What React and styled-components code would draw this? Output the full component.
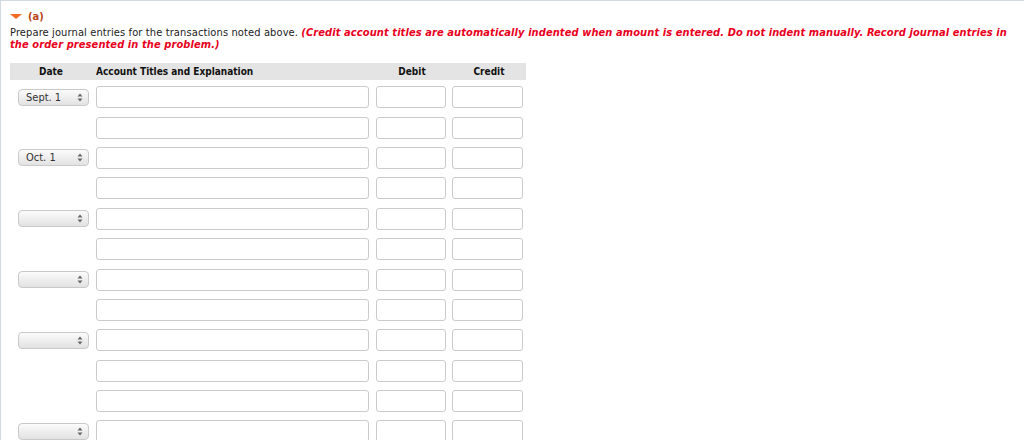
import React from "react";
import styled, { createGlobalStyle } from "styled-components";

const GlobalStyle = createGlobalStyle`
  html, body {
    margin: 0;
    padding: 0;
    background: #fff;
  }
  body {
    font-family: "DejaVu Sans Condensed", "DejaVu Sans", Verdana, sans-serif;
    font-size: 11px;
    color: #222;
  }
`;

const Page = styled.div`
  border-top: 1px solid #d3d9e3;
  border-left: 1px solid #d3d9e3;
  padding: 8px 10px 0 9px;
  height: 440px;
  box-sizing: border-box;
  overflow: hidden;
`;

const PartTitle = styled.div`
  display: flex;
  align-items: center;
  gap: 6px;
  height: 14px;
  font-weight: bold;
  font-size: 11px;
  color: #b8461c;
`;

const Caret = styled.span`
  width: 0;
  height: 0;
  border-left: 6px solid transparent;
  border-right: 6px solid transparent;
  border-top: 5px solid #f26a26;
`;

const Instructions = styled.p`
  margin: 4px 0 0;
  line-height: 12px;
  letter-spacing: 0.12px;
`;

const Warning = styled.span`
  color: #e8001c;
  font-weight: bold;
  font-style: italic;
  letter-spacing: 0.09px;
`;

const Journal = styled.div`
  margin-top: 12px;
  width: 516px;
`;

const Row = styled.div`
  display: grid;
  grid-template-columns: 82px 281px 76px 77px;
  align-items: center;
  height: ${(p) => (p.$head ? "17px" : "30.4px")};
  background: ${(p) => (p.$head ? "#e4e4e4" : "transparent")};
  &:nth-child(2) {
    margin-top: 2px;
  }
`;

const HeadCell = styled.div`
  font-weight: bold;
  font-size: 10px;
  color: #111;
  text-align: ${(p) => p.$align || "center"};
  padding: ${(p) => p.$pad || "0"};
`;

const Cell = styled.div`
  display: flex;
  align-items: center;
  padding: ${(p) => p.$pad};
`;

const TextBox = styled.div`
  box-sizing: border-box;
  width: ${(p) => p.$w}px;
  height: 22px;
  border: 1px solid #cbcbcb;
  border-radius: 3px;
  background: #fff;
`;

const DateSelect = styled.div`
  box-sizing: border-box;
  width: 71px;
  height: 17px;
  display: flex;
  align-items: center;
  justify-content: space-between;
  padding: 0 5px 0 7px;
  border: 1px solid #c9c9c9;
  border-radius: 4px;
  background: linear-gradient(#fbfbfb, #ececec 60%, #e2e2e2);
  color: #333;
  font-size: 11px;
`;

const Arrows = () => (
  <svg width="6" height="9" viewBox="0 0 6 9">
    <path d="M3 0.5 L5.5 3.5 H0.5 Z" fill="#666" />
    <path d="M3 8.5 L5.5 5.5 H0.5 Z" fill="#666" />
  </svg>
);

const rows = [
  "Sept. 1",
  null,
  "Oct. 1",
  null,
  "",
  null,
  "",
  null,
  "",
  null,
  null,
  "",
];

const App = () => (
  <Page>
    <GlobalStyle />
    <PartTitle>
      <Caret />
      (a)
    </PartTitle>
    <Instructions>
      Prepare journal entries for the transactions noted above.{" "}
      <Warning>
        (Credit account titles are automatically indented when amount is
        entered. Do not indent manually. Record journal entries in the order
        presented in the problem.)
      </Warning>
    </Instructions>
    <Journal>
      <Row $head>
        <HeadCell>Date</HeadCell>
        <HeadCell $align="left" $pad="0 0 0 4px">
          Account Titles and Explanation
        </HeadCell>
        <HeadCell $pad="0 0 0 2px">Debit</HeadCell>
        <HeadCell $pad="0 0 0 3px">Credit</HeadCell>
      </Row>
      {rows.map((date, i) => (
        <Row key={i}>
          <Cell $pad="0 0 0 8px">
            {date !== null && (
              <DateSelect>
                <span>{date}</span>
                <Arrows />
              </DateSelect>
            )}
          </Cell>
          <Cell $pad="0 0 0 4px">
            <TextBox $w={273} />
          </Cell>
          <Cell $pad="0 0 0 3px">
            <TextBox $w={70} />
          </Cell>
          <Cell $pad="0 0 0 3px">
            <TextBox $w={71} />
          </Cell>
        </Row>
      ))}
    </Journal>
  </Page>
);

export default App;
